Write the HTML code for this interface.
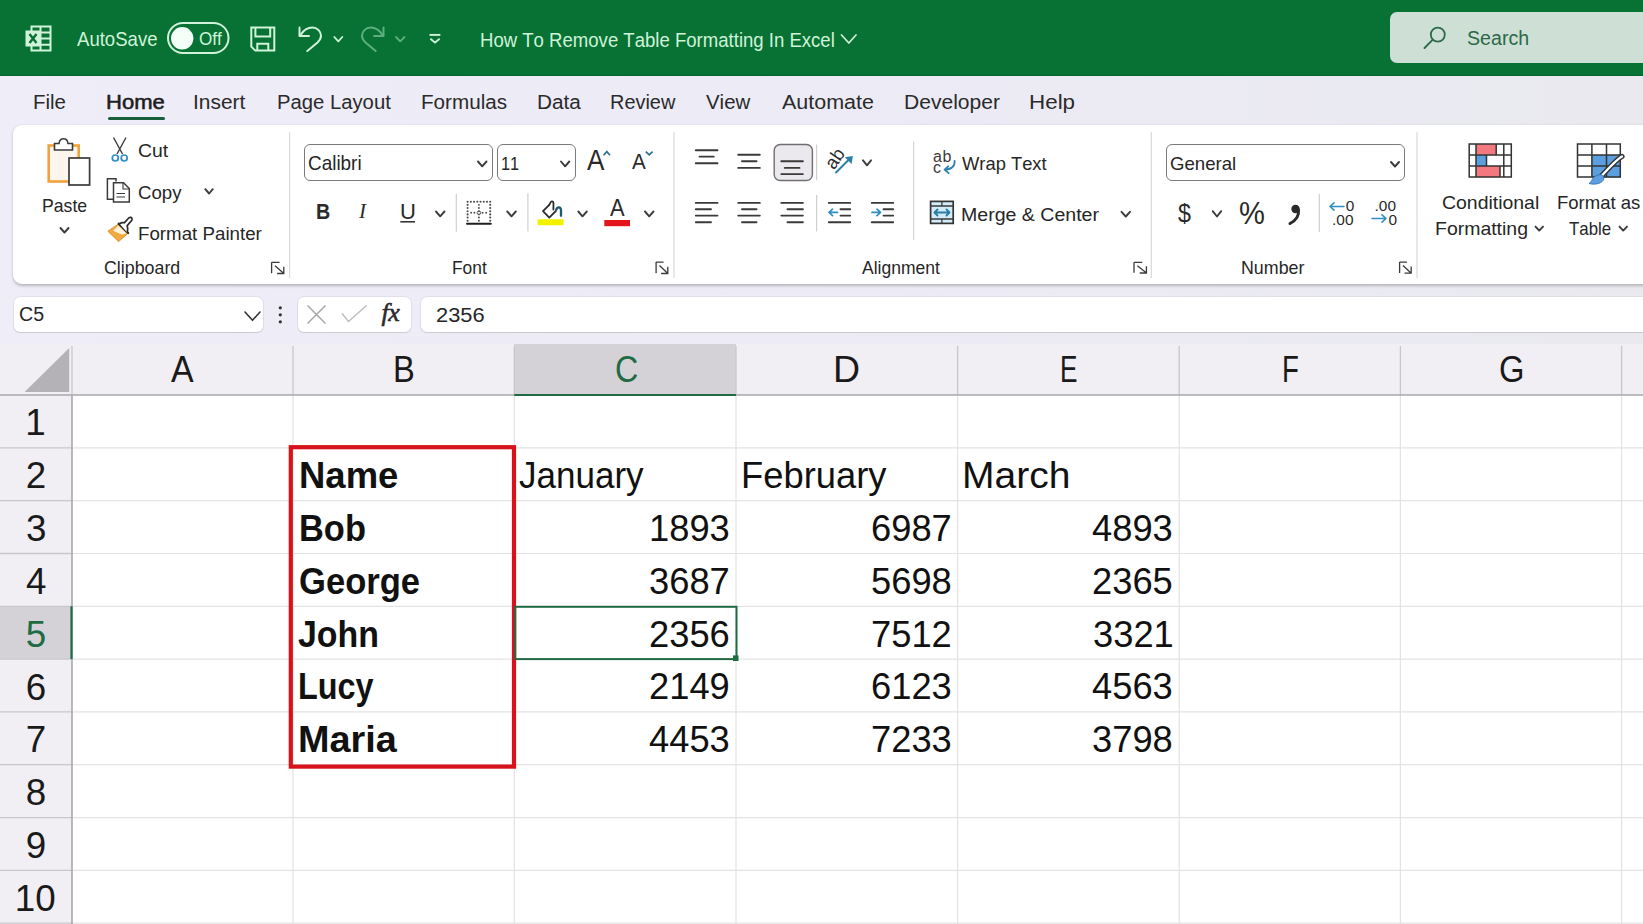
<!DOCTYPE html>
<html><head><meta charset="utf-8">
<style>
*{margin:0;padding:0;box-sizing:border-box}
html,body{width:1643px;height:924px;overflow:hidden;background:#fff;font-family:"Liberation Sans",sans-serif;color:#262626}
.a{position:absolute}
.t{position:absolute;white-space:nowrap;line-height:1;transform-origin:0 0;font-kerning:none}
svg{position:absolute;left:0;top:0}
</style></head><body>
<div class="a" style="left:0;top:0;width:1643px;height:76px;background:#077233;border-bottom:1px solid #05622c"></div>
<div class="a" style="left:0;top:76px;width:1643px;height:268px;background:linear-gradient(90deg,#eeedf8 0%,#ecebf5 60%,#e9e9ef 100%)"></div>
<div class="a" style="left:13px;top:125px;width:1660px;height:159px;background:#fff;border-radius:9px;box-shadow:0 1.5px 3px rgba(0,0,0,0.22)"></div>
<div class="a" style="left:1390px;top:12px;width:300px;height:51px;background:#cee0d6;border-radius:7px"></div>
<div class="a" style="left:14px;top:297px;width:249px;height:35px;background:#fff;border-radius:6px;box-shadow:0 0 0 1px rgba(0,0,0,0.05),0 1px 1px rgba(0,0,0,0.10)"></div>
<div class="a" style="left:298px;top:297px;width:113px;height:35px;background:#fff;border-radius:6px;box-shadow:0 0 0 1px rgba(0,0,0,0.05),0 1px 1px rgba(0,0,0,0.10)"></div>
<div class="a" style="left:421px;top:297px;width:1300px;height:35px;background:#fff;border-radius:6px;box-shadow:0 0 0 1px rgba(0,0,0,0.05),0 1px 1px rgba(0,0,0,0.10)"></div>
<div class="t" style="left:76.96px;top:30.19px;font-size:19.62px;color:#d0f3da;font-weight:400;transform:scaleX(0.9468);">AutoSave</div>
<div class="t" style="left:198.69px;top:31.49px;font-size:17.73px;color:#d0f3da;font-weight:400;transform:scaleX(0.9635);">Off</div>
<div class="t" style="left:480.48px;top:28.66px;font-size:21.08px;color:#d0f3da;font-weight:400;transform:scaleX(0.8805);">How To Remove Table Formatting In Excel</div>
<div class="t" style="left:1467.11px;top:29.47px;font-size:19.77px;color:#2b6848;font-weight:400;transform:scaleX(0.9925);">Search</div>
<div class="t" style="left:32.92px;top:91.77px;font-size:20.35px;color:#2a2a2a;font-weight:400;transform:scaleX(1.0061);">File</div>
<div class="t" style="left:105.79px;top:91.77px;font-size:20.35px;color:#1c1c1c;font-weight:400;transform:scaleX(1.0830);-webkit-text-stroke:0.55px #1c1c1c">Home</div>
<div class="t" style="left:192.87px;top:91.77px;font-size:20.35px;color:#2a2a2a;font-weight:400;transform:scaleX(1.0273);">Insert</div>
<div class="t" style="left:277.34px;top:91.77px;font-size:20.35px;color:#2a2a2a;font-weight:400;transform:scaleX(0.9960);">Page Layout</div>
<div class="t" style="left:420.71px;top:91.77px;font-size:20.35px;color:#2a2a2a;font-weight:400;transform:scaleX(1.0146);">Formulas</div>
<div class="t" style="left:536.59px;top:91.77px;font-size:20.35px;color:#2a2a2a;font-weight:400;transform:scaleX(1.0215);">Data</div>
<div class="t" style="left:610.37px;top:91.77px;font-size:20.35px;color:#2a2a2a;font-weight:400;transform:scaleX(0.9785);">Review</div>
<div class="t" style="left:706.31px;top:91.77px;font-size:20.35px;color:#2a2a2a;font-weight:400;transform:scaleX(1.0030);">View</div>
<div class="t" style="left:781.66px;top:91.77px;font-size:20.35px;color:#2a2a2a;font-weight:400;transform:scaleX(1.0562);">Automate</div>
<div class="t" style="left:904.17px;top:91.77px;font-size:20.35px;color:#2a2a2a;font-weight:400;transform:scaleX(1.0348);">Developer</div>
<div class="t" style="left:1029.16px;top:91.77px;font-size:20.35px;color:#2a2a2a;font-weight:400;transform:scaleX(1.1010);">Help</div>
<div class="a" style="left:107.5px;top:116.8px;width:57.5px;height:3.4px;background:#1a5f3b;border-radius:2px"></div>
<div class="t" style="left:42.15px;top:197.79px;font-size:17.73px;color:#262626;font-weight:400;transform:scaleX(0.9953);">Paste</div>
<div class="t" style="left:137.91px;top:143.24px;font-size:17.44px;color:#262626;font-weight:400;transform:scaleX(1.1137);">Cut</div>
<div class="t" style="left:137.95px;top:184.54px;font-size:17.44px;color:#262626;font-weight:400;transform:scaleX(1.0679);">Copy</div>
<div class="t" style="left:138.46px;top:225.54px;font-size:17.44px;color:#262626;font-weight:400;transform:scaleX(1.0737);">Format Painter</div>
<div class="t" style="left:103.80px;top:259.54px;font-size:17.44px;color:#262626;font-weight:400;transform:scaleX(1.0214);">Clipboard</div>
<div class="a" style="left:304.1px;top:143.5px;width:188.7px;height:37.8px;border-radius:6px;background:#fff;border:1.4px solid #7a7a7a"></div>
<div class="t" style="left:307.64px;top:153.81px;font-size:19.48px;color:#262626;font-weight:400;transform:scaleX(0.9717);">Calibri</div>
<div class="a" style="left:496.5px;top:143.9px;width:79.2px;height:36.9px;border-radius:6px;background:#fff;border:1.4px solid #7a7a7a"></div>
<div class="t" style="left:501.26px;top:154.50px;font-size:18.31px;color:#262626;font-weight:400;transform:scaleX(0.8904);">11</div>
<div class="t" style="left:586.95px;top:144.53px;font-size:30.09px;color:#2a2a2a;font-weight:400;transform:scaleX(0.8672);">A</div>
<div class="t" style="left:632.26px;top:151.05px;font-size:22.38px;color:#2a2a2a;font-weight:400;transform:scaleX(0.9230);">A</div>
<div class="t" style="left:315.68px;top:200.16px;font-size:22.97px;color:#2a2a2a;font-weight:700;transform:scaleX(0.8568);">B</div>
<div class="t" style="left:359px;top:201px;font-size:21px;color:#2a2a2a;font-family:'Liberation Serif',serif;font-style:italic">I</div>
<div class="t" style="left:399.80px;top:200.16px;font-size:22.97px;color:#2a2a2a;font-weight:400;transform:scaleX(0.9585);">U</div>
<div class="t" style="left:609.96px;top:197.31px;font-size:23.26px;color:#2a2a2a;font-weight:400;transform:scaleX(0.9403);">A</div>
<div class="t" style="left:452.38px;top:260.24px;font-size:17.44px;color:#262626;font-weight:400;transform:scaleX(0.9957);">Font</div>
<div class="t" style="left:828px;top:145.5px;font-size:18.5px;color:#2a2a2a;transform:rotate(-55deg);transform-origin:12px 14px">ab</div>
<div class="t" style="left:933px;top:148.8px;font-size:16px;color:#3a3a3a;letter-spacing:0.6px">ab</div>
<div class="t" style="left:933px;top:159.8px;font-size:16px;color:#3a3a3a">c</div>
<div class="t" style="left:961.92px;top:154.50px;font-size:18.31px;color:#262626;font-weight:400;transform:scaleX(1.0030);">Wrap Text</div>
<div class="t" style="left:960.80px;top:206.01px;font-size:18.90px;color:#262626;font-weight:400;transform:scaleX(1.0349);">Merge &amp; Center</div>
<div class="t" style="left:862.37px;top:260.24px;font-size:17.44px;color:#262626;font-weight:400;transform:scaleX(1.0026);">Alignment</div>
<div class="a" style="left:1166.4px;top:144.0px;width:238.3px;height:37.0px;border-radius:6px;background:#fff;border:1.4px solid #7a7a7a"></div>
<div class="t" style="left:1169.56px;top:154.18px;font-size:19.04px;color:#262626;font-weight:400;transform:scaleX(0.9785);">General</div>
<div class="t" style="left:1177.75px;top:199.85px;font-size:26.16px;color:#2a2a2a;font-weight:400;transform:scaleX(0.8882);">$</div>
<div class="t" style="left:1238.56px;top:198.15px;font-size:31.25px;color:#2a2a2a;font-weight:400;transform:scaleX(0.9312);">%</div>
<div class="t" style="left:1345.80px;top:198.36px;font-size:15.41px;color:#2a2a2a;font-weight:400;transform:scaleX(1.0000);">0</div>
<div class="t" style="left:1332.09px;top:211.56px;font-size:15.41px;color:#2a2a2a;font-weight:400;transform:scaleX(1.0000);">.00</div>
<div class="t" style="left:1374.59px;top:198.36px;font-size:15.41px;color:#2a2a2a;font-weight:400;transform:scaleX(1.0000);">.00</div>
<div class="t" style="left:1388.40px;top:211.56px;font-size:15.41px;color:#2a2a2a;font-weight:400;transform:scaleX(1.0000);">0</div>
<div class="t" style="left:1240.54px;top:259.77px;font-size:17.88px;color:#262626;font-weight:400;transform:scaleX(0.9980);">Number</div>
<div class="t" style="left:1441.81px;top:194.45px;font-size:18.60px;color:#262626;font-weight:400;transform:scaleX(1.0451);">Conditional</div>
<div class="t" style="left:1434.90px;top:220.05px;font-size:18.60px;color:#262626;font-weight:400;transform:scaleX(1.0465);">Formatting</div>
<div class="t" style="left:1557.08px;top:194.45px;font-size:18.60px;color:#262626;font-weight:400;transform:scaleX(0.9958);">Format as</div>
<div class="t" style="left:1569.32px;top:220.05px;font-size:18.60px;color:#262626;font-weight:400;transform:scaleX(0.9052);">Table</div>
<div class="t" style="left:19.00px;top:305.27px;font-size:19.77px;color:#262626;font-weight:400;transform:scaleX(0.9942);">C5</div>
<div class="t" style="left:381.5px;top:300px;font-size:26px;font-weight:400;-webkit-text-stroke:0.6px #2a2a2a;font-family:'Liberation Serif',serif;font-style:italic;color:#2a2a2a;letter-spacing:-0.5px">fx</div>
<div class="t" style="left:436.30px;top:305.67px;font-size:19.77px;color:#262626;font-weight:400;transform:scaleX(1.1066);">2356</div>
<div class="a" style="left:0;top:344.0px;width:1643px;height:51.0px;background:#f1eff3"></div>
<div class="a" style="left:0;top:395.0px;width:72px;height:529.0px;background:#f1eff3"></div>
<div class="a" style="left:514.3px;top:344.0px;width:221.7px;height:51.0px;background:#d4d2d7"></div>
<div class="a" style="left:0;top:606.3px;width:72px;height:52.8px;background:#d4d2d7"></div>
<div class="t" style="left:170.93px;top:351.30px;font-size:37.21px;color:#1a1a1a;font-weight:400;transform:scaleX(0.9119);">A</div>
<div class="t" style="left:393.32px;top:351.30px;font-size:37.21px;color:#1a1a1a;font-weight:400;transform:scaleX(0.8786);">B</div>
<div class="t" style="left:614.56px;top:351.30px;font-size:37.21px;color:#1f6b43;font-weight:400;transform:scaleX(0.8657);">C</div>
<div class="t" style="left:832.93px;top:351.30px;font-size:37.21px;color:#1a1a1a;font-weight:400;transform:scaleX(1.0073);">D</div>
<div class="t" style="left:1059.75px;top:351.30px;font-size:37.21px;color:#1a1a1a;font-weight:400;transform:scaleX(0.7041);">E</div>
<div class="t" style="left:1281.93px;top:351.30px;font-size:37.21px;color:#1a1a1a;font-weight:400;transform:scaleX(0.7423);">F</div>
<div class="t" style="left:1499.35px;top:351.30px;font-size:37.21px;color:#1a1a1a;font-weight:400;transform:scaleX(0.8810);">G</div>
<div class="t" style="left:25.27px;top:405.47px;font-size:36.77px;color:#1a1a1a;font-weight:400;transform:scaleX(1.0000);">1</div>
<div class="t" style="left:25.77px;top:458.29px;font-size:36.77px;color:#1a1a1a;font-weight:400;transform:scaleX(1.0000);">2</div>
<div class="t" style="left:25.88px;top:511.11px;font-size:36.77px;color:#1a1a1a;font-weight:400;transform:scaleX(1.0000);">3</div>
<div class="t" style="left:25.89px;top:563.93px;font-size:36.77px;color:#1a1a1a;font-weight:400;transform:scaleX(1.0000);">4</div>
<div class="t" style="left:25.81px;top:616.75px;font-size:36.77px;color:#1f6b43;font-weight:400;transform:scaleX(1.0000);">5</div>
<div class="t" style="left:25.65px;top:669.57px;font-size:36.77px;color:#1a1a1a;font-weight:400;transform:scaleX(1.0000);">6</div>
<div class="t" style="left:25.76px;top:722.39px;font-size:36.77px;color:#1a1a1a;font-weight:400;transform:scaleX(1.0000);">7</div>
<div class="t" style="left:25.77px;top:775.21px;font-size:36.77px;color:#1a1a1a;font-weight:400;transform:scaleX(1.0000);">8</div>
<div class="t" style="left:25.78px;top:828.03px;font-size:36.77px;color:#1a1a1a;font-weight:400;transform:scaleX(1.0000);">9</div>
<div class="t" style="left:14.87px;top:880.85px;font-size:36.77px;color:#1a1a1a;font-weight:400;transform:scaleX(1.0000);">10</div>
<div class="t" style="left:298.76px;top:457.12px;font-size:37.21px;color:#111;font-weight:700;transform:scaleX(0.9807);">Name</div>
<div class="t" style="left:519.45px;top:457.12px;font-size:37.21px;color:#111;font-weight:400;transform:scaleX(0.9414);">January</div>
<div class="t" style="left:740.82px;top:457.12px;font-size:37.21px;color:#111;font-weight:400;transform:scaleX(0.9769);">February</div>
<div class="t" style="left:961.60px;top:457.12px;font-size:37.21px;color:#111;font-weight:400;transform:scaleX(1.0489);">March</div>
<div class="t" style="left:298.90px;top:509.94px;font-size:37.21px;color:#111;font-weight:700;transform:scaleX(0.9251);">Bob</div>
<div class="t" style="left:649.23px;top:509.94px;font-size:37.21px;color:#111;font-weight:400;transform:scaleX(0.9757);">1893</div>
<div class="t" style="left:871.07px;top:509.94px;font-size:37.21px;color:#111;font-weight:400;transform:scaleX(0.9757);">6987</div>
<div class="t" style="left:1092.43px;top:509.94px;font-size:37.21px;color:#111;font-weight:400;transform:scaleX(0.9757);">4893</div>
<div class="t" style="left:299.08px;top:562.76px;font-size:37.21px;color:#111;font-weight:700;transform:scaleX(0.9296);">George</div>
<div class="t" style="left:649.47px;top:562.76px;font-size:37.21px;color:#111;font-weight:400;transform:scaleX(0.9757);">3687</div>
<div class="t" style="left:870.82px;top:562.76px;font-size:37.21px;color:#111;font-weight:400;transform:scaleX(0.9757);">5698</div>
<div class="t" style="left:1092.36px;top:562.76px;font-size:37.21px;color:#111;font-weight:400;transform:scaleX(0.9757);">2365</div>
<div class="t" style="left:298.29px;top:615.58px;font-size:37.21px;color:#111;font-weight:700;transform:scaleX(0.9115);">John</div>
<div class="t" style="left:649.23px;top:615.58px;font-size:37.21px;color:#111;font-weight:400;transform:scaleX(0.9757);">2356</div>
<div class="t" style="left:871.07px;top:615.58px;font-size:37.21px;color:#111;font-weight:400;transform:scaleX(0.9757);">7512</div>
<div class="t" style="left:1092.61px;top:615.58px;font-size:37.21px;color:#111;font-weight:400;transform:scaleX(0.9757);">3321</div>
<div class="t" style="left:298.33px;top:668.40px;font-size:37.21px;color:#111;font-weight:700;transform:scaleX(0.8698);">Lucy</div>
<div class="t" style="left:649.36px;top:668.40px;font-size:37.21px;color:#111;font-weight:400;transform:scaleX(0.9757);">2149</div>
<div class="t" style="left:870.83px;top:668.40px;font-size:37.21px;color:#111;font-weight:400;transform:scaleX(0.9757);">6123</div>
<div class="t" style="left:1092.43px;top:668.40px;font-size:37.21px;color:#111;font-weight:400;transform:scaleX(0.9757);">4563</div>
<div class="t" style="left:297.97px;top:721.22px;font-size:37.21px;color:#111;font-weight:700;transform:scaleX(1.0163);">Maria</div>
<div class="t" style="left:649.23px;top:721.22px;font-size:37.21px;color:#111;font-weight:400;transform:scaleX(0.9757);">4453</div>
<div class="t" style="left:870.83px;top:721.22px;font-size:37.21px;color:#111;font-weight:400;transform:scaleX(0.9757);">7233</div>
<div class="t" style="left:1092.42px;top:721.22px;font-size:37.21px;color:#111;font-weight:400;transform:scaleX(0.9757);">3798</div>
<svg width="1643" height="924" viewBox="0 0 1643 924">
<rect x="31.5" y="26.5" width="19" height="24" fill="none" stroke="#d0f3da" stroke-width="2"/>
<path d="M40.5 26.5V50.5M31.5 32.5H50.5M31.5 38.5H50.5M31.5 44.8H50.5" stroke="#d0f3da" stroke-width="2"/>
<rect x="25.5" y="30.5" width="15" height="16" fill="#d0f3da"/>
<path d="M29.5 34L36.5 43M36.5 34L29.5 43" stroke="#077233" stroke-width="2.4"/>
<rect x="168" y="23" width="60.5" height="30" rx="15" fill="none" stroke="#d0f3da" stroke-width="2"/>
<circle cx="182.2" cy="38.3" r="11.2" fill="#f4fff7"/>
<path d="M251.3 27.6H274.3V50.6H255.3L251.3 46.6Z" fill="none" stroke="#d0f3da" stroke-width="2"/>
<path d="M255.4 27.6V36.4H270.2V27.6M257.3 50.6V43.8H268.3V50.6" fill="none" stroke="#d0f3da" stroke-width="2"/>
<path d="M299.5 27.5V36H309" fill="none" stroke="#d0f3da" stroke-width="2" stroke-linecap="round" stroke-linejoin="round"/>
<path d="M300.5 35C304 29.5 308 27.6 312.3 27.6C317.5 27.6 321 31.5 321 35.8C321 38.5 319.5 40.6 317.5 42.5L307.3 51" fill="none" stroke="#d0f3da" stroke-width="2" stroke-linecap="round"/>
<path d="M334.3 37.0L338.3 41.3L342.3 37.0" fill="none" stroke="#d0f3da" stroke-width="1.80" stroke-linecap="round" stroke-linejoin="round"/>
<path d="M383.5 27.5V36H374" fill="none" stroke="#5fae80" stroke-width="2" stroke-linecap="round" stroke-linejoin="round"/>
<path d="M382.5 35C379 29.5 375 27.6 370.7 27.6C365.5 27.6 362 31.5 362 35.8C362 38.5 363.5 40.6 365.5 42.5L375.7 51" fill="none" stroke="#5fae80" stroke-width="2" stroke-linecap="round"/>
<path d="M396.0 37.0L400.2 41.3L404.5 37.0" fill="none" stroke="#5fae80" stroke-width="1.80" stroke-linecap="round" stroke-linejoin="round"/>
<path d="M429.5 34.9H440.4" stroke="#d0f3da" stroke-width="1.9"/>
<path d="M431.0 39.2L435.0 42.6L439.0 39.2" fill="none" stroke="#d0f3da" stroke-width="1.90" stroke-linecap="round" stroke-linejoin="round"/>
<path d="M841.5 35.0L848.8 43.0L856.0 35.0" fill="none" stroke="#d0f3da" stroke-width="1.70" stroke-linecap="round" stroke-linejoin="round"/>
<circle cx="1437.8" cy="34.6" r="7" fill="none" stroke="#2d6a4a" stroke-width="1.8"/>
<path d="M1432.8 39.6L1424.5 48" stroke="#2d6a4a" stroke-width="1.9" stroke-linecap="round"/>
<rect x="48.7" y="145.5" width="30" height="36" fill="#fdf6ec" stroke="#f0a33a" stroke-width="2.6"/>
<path d="M54.5 150V143.5H59C59.5 140 61 138.7 63.5 138.7C66 138.7 67.5 140 68 143.5H72.5V150Z" fill="#fff" stroke="#3b3b3b" stroke-width="1.6"/>
<rect x="69" y="158" width="20.6" height="27" fill="#fff" stroke="#3b3b3b" stroke-width="1.7"/>
<path d="M60.5 228.0L64.5 232.5L68.5 228.0" fill="none" stroke="#3b3b3b" stroke-width="1.90" stroke-linecap="round" stroke-linejoin="round"/>
<path d="M113.5 137.5L122.5 154M126 137.5L117 154" stroke="#3b3b3b" stroke-width="1.4"/>
<circle cx="115.3" cy="158" r="3" fill="none" stroke="#2f8fc4" stroke-width="1.7"/><circle cx="124.2" cy="158" r="3" fill="none" stroke="#2f8fc4" stroke-width="1.7"/>
<path d="M116 181.5V178.8H107.4V199.2H113" fill="none" stroke="#3b3b3b" stroke-width="1.5"/>
<path d="M113.5 182.7H123.5L129.3 188.5V202H113.5Z" fill="#fff" stroke="#3b3b3b" stroke-width="1.5"/>
<path d="M123 183V189H129M116.5 193.5H125M116.5 197H125" fill="none" stroke="#3b3b3b" stroke-width="1.1"/>
<path d="M205.3 189.2L209.1 193.5L212.8 189.2" fill="none" stroke="#3b3b3b" stroke-width="1.90" stroke-linecap="round" stroke-linejoin="round"/>
<path d="M107.8 231.2L118.2 224.2L127.8 233.6L118.6 241.6Z" fill="#f2a93e" stroke="#d68d2a" stroke-width="0.9" stroke-linejoin="round"/>
<path d="M118.4 225.6L126.4 233.4L121.5 234.6L113.2 230.8Z" fill="#fff3de"/>
<path d="M118.7 223.6L128.2 233" stroke="#2a2a2a" stroke-width="2.2" stroke-linecap="round"/>
<path d="M119.6 223.8C121.2 222.6 122.8 222.4 124.2 222.8L128.8 218C129.8 217 131.6 217.2 132 218.6C132.3 219.4 132 220.2 131.4 220.8L127.2 225.6C127.8 227.6 127.8 230.4 127.2 232.4" fill="#fff" stroke="#2a2a2a" stroke-width="1.7" stroke-linejoin="round"/>
<path d="M271.6 273.3V262.3M271.6 262.3H279.6" stroke="#3b3b3b" stroke-width="1.3" fill="none"/>
<path d="M275.0 265.7L283.6 273.3M277.1 273.5H283.8V266.8" stroke="#3b3b3b" stroke-width="1.3" fill="none"/>
<path d="M289.6 132.0V278.0" stroke="#d9d9d9" stroke-width="1.2"/>
<path d="M478.0 161.5L482.2 166.3L486.5 161.5" fill="none" stroke="#3b3b3b" stroke-width="1.90" stroke-linecap="round" stroke-linejoin="round"/>
<path d="M561.0 161.5L565.1 166.3L569.3 161.5" fill="none" stroke="#3b3b3b" stroke-width="1.90" stroke-linecap="round" stroke-linejoin="round"/>
<path d="M603.6 155.2L606.8 151.6L610 155.2" fill="none" stroke="#2f7390" stroke-width="1.7"/>
<path d="M645.8 151.6L649.2 154.8L652.6 151.6" fill="none" stroke="#2f7390" stroke-width="1.8"/>
<path d="M400.3 221.8H415" stroke="#2a2a2a" stroke-width="1.5"/>
<path d="M436.0 211.5L440.2 216.3L444.5 211.5" fill="none" stroke="#3b3b3b" stroke-width="1.90" stroke-linecap="round" stroke-linejoin="round"/>
<path d="M456.3 194.0V231.8" stroke="#cfcfcf" stroke-width="1.2"/>
<g fill="#4d4d4d"><circle cx="467.60" cy="201.7" r="1.05"/><circle cx="470.83" cy="201.7" r="1.05"/><circle cx="474.06" cy="201.7" r="1.05"/><circle cx="477.29" cy="201.7" r="1.05"/><circle cx="480.51" cy="201.7" r="1.05"/><circle cx="483.74" cy="201.7" r="1.05"/><circle cx="486.97" cy="201.7" r="1.05"/><circle cx="490.20" cy="201.7" r="1.05"/><circle cx="467.6" cy="204.87" r="1.05"/><circle cx="490.2" cy="204.87" r="1.05"/><circle cx="478.9" cy="204.87" r="0.95"/><circle cx="467.6" cy="208.04" r="1.05"/><circle cx="490.2" cy="208.04" r="1.05"/><circle cx="478.9" cy="208.04" r="0.95"/><circle cx="467.6" cy="211.21" r="1.05"/><circle cx="490.2" cy="211.21" r="1.05"/><circle cx="478.9" cy="211.21" r="0.95"/><circle cx="467.6" cy="214.38" r="1.05"/><circle cx="490.2" cy="214.38" r="1.05"/><circle cx="478.9" cy="214.38" r="0.95"/><circle cx="467.6" cy="217.55" r="1.05"/><circle cx="490.2" cy="217.55" r="1.05"/><circle cx="478.9" cy="217.55" r="0.95"/><circle cx="467.6" cy="220.72" r="1.05"/><circle cx="490.2" cy="220.72" r="1.05"/><circle cx="478.9" cy="220.72" r="0.95"/><circle cx="471.10" cy="212.8" r="0.95"/><circle cx="474.40" cy="212.8" r="0.95"/><circle cx="482.60" cy="212.8" r="0.95"/><circle cx="486.20" cy="212.8" r="0.95"/><circle cx="478.9" cy="212.8" r="1.8" fill="none" stroke="#555" stroke-width="0.9"/></g>
<path d="M467 223.8H490.8" stroke="#1e1e1e" stroke-width="2" stroke-linecap="round"/>
<path d="M507.3 211.5L511.5 216.3L515.8 211.5" fill="none" stroke="#3b3b3b" stroke-width="1.90" stroke-linecap="round" stroke-linejoin="round"/>
<path d="M527.9 193.3V231.4" stroke="#cfcfcf" stroke-width="1.2"/>
<path d="M549.3 204.8L543 211.2L549.3 217.6L556.2 210.6" fill="none" stroke="#2a2a2a" stroke-width="1.8" stroke-linejoin="round"/>
<path d="M549.3 204.8L550.4 202.6C551.2 200.9 553.4 201 553.5 203.2L553.4 209.6" fill="none" stroke="#2a2a2a" stroke-width="1.8" stroke-linecap="round"/>
<path d="M556.2 209.8C557.2 206.6 560.8 206.6 561 210.2V215.8" fill="none" stroke="#1f5a70" stroke-width="2.3" stroke-linecap="round"/>
<rect x="537.6" y="219.3" width="26" height="6" rx="1" fill="#f2f200"/>
<path d="M578.3 211.5L582.5 216.3L586.8 211.5" fill="none" stroke="#3b3b3b" stroke-width="1.90" stroke-linecap="round" stroke-linejoin="round"/>
<rect x="604.3" y="220" width="25.7" height="6.2" fill="#e3141b"/>
<path d="M645.0 211.5L649.2 216.3L653.5 211.5" fill="none" stroke="#3b3b3b" stroke-width="1.90" stroke-linecap="round" stroke-linejoin="round"/>
<path d="M656.1 273.3V262.1M656.1 262.1H663.6" stroke="#3b3b3b" stroke-width="1.3" fill="none"/>
<path d="M659.5 265.5L667.6 273.3M661.1 273.5H667.8V266.8" stroke="#3b3b3b" stroke-width="1.3" fill="none"/>
<path d="M674.0 132.0V278.0" stroke="#d9d9d9" stroke-width="1.2"/>
<path d="M695.8 150.2H717.5M699.5 156.6H713.8M695.8 163.2H717.5" stroke="#3a3a3a" stroke-width="1.9" stroke-linecap="round"/>
<path d="M738.2 154.7H759.8M742.0 161.3H756.5M738.2 167.9H759.8" stroke="#3a3a3a" stroke-width="1.9" stroke-linecap="round"/>
<rect x="774.2" y="144.5" width="38.2" height="36" rx="6" fill="#ebe9ee" stroke="#6f6f6f" stroke-width="1.4"/>
<path d="M781.3 161.3H802.9M784.8 167.9H799.5M781.3 174.1H802.9" stroke="#3a3a3a" stroke-width="1.9" stroke-linecap="round"/>
<path d="M816.6 144.5V180.3" stroke="#cfcfcf" stroke-width="1.2"/>
<path d="M836 172.5L849.5 159" fill="none" stroke="#2b7fa8" stroke-width="1.9" stroke-linecap="round"/>
<path d="M852.8 156L844.8 157.2L851.6 164Z" fill="#2b7fa8"/>
<path d="M863.0 160.3L867.0 165.3L871.0 160.3" fill="none" stroke="#3b3b3b" stroke-width="1.90" stroke-linecap="round" stroke-linejoin="round"/>
<path d="M695.8 202.9H717.5M695.8 209.2H711.0M695.8 215.6H717.5M695.8 222.2H711.0" stroke="#3a3a3a" stroke-width="1.9" stroke-linecap="round"/>
<path d="M738.2 202.9H759.8M742.0 209.2H756.5M738.2 215.6H759.8M742.0 222.2H756.5" stroke="#3a3a3a" stroke-width="1.9" stroke-linecap="round"/>
<path d="M781.3 202.9H802.9M787.5 209.2H802.9M781.3 215.6H802.9M787.5 222.2H802.9" stroke="#3a3a3a" stroke-width="1.9" stroke-linecap="round"/>
<path d="M816.6 194.9V231.4" stroke="#cfcfcf" stroke-width="1.2"/>
<path d="M828.8 202.9H850.2M840.5 209.2H850.2M840.5 215.6H850.2M828.8 222.2H850.2" stroke="#3a3a3a" stroke-width="1.9" stroke-linecap="round"/>
<path d="M829 212.4H837.5M832.5 209.2L829 212.4L832.5 215.6" fill="none" stroke="#2f8fc4" stroke-width="1.7" stroke-linecap="round" stroke-linejoin="round"/>
<path d="M871.8 202.9H893.2M883.5 209.2H893.2M883.5 215.6H893.2M871.8 222.2H893.2" stroke="#3a3a3a" stroke-width="1.9" stroke-linecap="round"/>
<path d="M872 212.4H880.5M877 209.2L880.5 212.4L877 215.6" fill="none" stroke="#2f8fc4" stroke-width="1.7" stroke-linecap="round" stroke-linejoin="round"/>
<path d="M913.7 141.6V240.0" stroke="#d4d4d4" stroke-width="1.2"/>
<path d="M954.6 160.8C955.2 166.2 951.2 169.6 944.6 169.6M944.6 169.6L948.2 166.3M944.6 169.6L948.6 173.2" fill="none" stroke="#2c82b0" stroke-width="1.8" stroke-linecap="round" stroke-linejoin="round"/>
<rect x="930.6" y="201.4" width="22.6" height="22" fill="#d2edf9" stroke="#333" stroke-width="1.7"/>
<path d="M930.4 206H953.4M930.4 219H953.4M941.9 201.5V206M941.9 219V223.5" stroke="#3a3a3a" stroke-width="1.3"/>
<path d="M934.5 212.5H949.5M937.5 209.5L934.5 212.5L937.5 215.5M946.5 209.5L949.5 212.5L946.5 215.5" fill="none" stroke="#287ea8" stroke-width="1.9" stroke-linecap="round" stroke-linejoin="round"/>
<path d="M1121.5 211.8L1125.8 216.5L1130.0 211.8" fill="none" stroke="#3b3b3b" stroke-width="1.90" stroke-linecap="round" stroke-linejoin="round"/>
<path d="M1134.0 272.8V262.3M1134.0 262.3H1142.2" stroke="#3b3b3b" stroke-width="1.3" fill="none"/>
<path d="M1137.4 265.7L1146.2 272.8M1139.7 273.0H1146.4V266.3" stroke="#3b3b3b" stroke-width="1.3" fill="none"/>
<path d="M1151.3 132.0V278.0" stroke="#d9d9d9" stroke-width="1.2"/>
<path d="M1391.0 162.0L1395.0 166.5L1399.0 162.0" fill="none" stroke="#3b3b3b" stroke-width="1.90" stroke-linecap="round" stroke-linejoin="round"/>
<path d="M1212.7 211.2L1217.0 216.5L1221.2 211.2" fill="none" stroke="#3b3b3b" stroke-width="1.90" stroke-linecap="round" stroke-linejoin="round"/>
<circle cx="1295.5" cy="209" r="4.2" fill="#2a2a2a"/><path d="M1298.5 210C1299 215 1297 220 1290 223.5" fill="none" stroke="#2a2a2a" stroke-width="3" stroke-linecap="round"/>
<path d="M1319.3 194.0V232.0" stroke="#cfcfcf" stroke-width="1.2"/>
<path d="M1330 206.5H1344M1334 202.8L1330 206.5L1334 210.2" fill="none" stroke="#2f8fc4" stroke-width="1.6" stroke-linecap="round" stroke-linejoin="round"/>
<path d="M1372 218.5H1386M1382 214.8L1386 218.5L1382 222.2" fill="none" stroke="#2f8fc4" stroke-width="1.6" stroke-linecap="round" stroke-linejoin="round"/>
<path d="M1399.6 272.9V262.1M1399.6 262.1H1407.0" stroke="#3b3b3b" stroke-width="1.3" fill="none"/>
<path d="M1403.0 265.5L1411.0 272.9M1404.5 273.1H1411.2V266.4" stroke="#3b3b3b" stroke-width="1.3" fill="none"/>
<path d="M1417.0 132.0V278.0" stroke="#d9d9d9" stroke-width="1.2"/>
<rect x="1476" y="144" width="20.2" height="10.8" fill="#f4797f"/>
<rect x="1476" y="155" width="10.5" height="11" fill="#5b9fe0"/>
<rect x="1476" y="166" width="24" height="11.2" fill="#f4797f"/>
<path d="M1469.2 144H1511.3V177.1H1469.2ZM1476 144V177.1M1496.2 144V155M1503.8 144V177.1M1469.2 155H1511.3M1469.2 166H1511.3M1486.5 155V166M1500 166V177.1" fill="none" stroke="#333" stroke-width="1.5"/>
<rect x="1591.9" y="155" width="29" height="22.5" fill="#5b9fe0"/>
<path d="M1577.5 144H1620.3V177.1H1577.5ZM1591.9 144V177.1M1606.5 144V177.1M1577.5 155H1620.3M1577.5 166H1620.3" fill="none" stroke="#333" stroke-width="1.5"/>
<path d="M1622 156.5C1619 158 1607 170 1601.5 176" fill="none" stroke="#333" stroke-width="5.2" stroke-linecap="round"/>
<path d="M1622 156.5C1619 158 1607 170 1601.5 176" fill="none" stroke="#fff" stroke-width="2.4" stroke-linecap="round"/>
<path d="M1597 175.5C1601 173 1605 176 1603.5 180C1601 184 1594 185 1589 183.5C1592.5 181.5 1592 176.5 1597 175.5Z" fill="#5b9fe0" stroke="#2a6fb0" stroke-width="0.8"/>
<path d="M1535.5 226.6L1539.2 230.6L1543.0 226.6" fill="none" stroke="#3b3b3b" stroke-width="1.90" stroke-linecap="round" stroke-linejoin="round"/>
<path d="M1619.5 226.6L1623.2 230.6L1627.0 226.6" fill="none" stroke="#3b3b3b" stroke-width="1.90" stroke-linecap="round" stroke-linejoin="round"/>
<path d="M245.0 312.0L252.5 320.3L260.0 312.0" fill="none" stroke="#333" stroke-width="1.60" stroke-linecap="round" stroke-linejoin="round"/>
<circle cx="280.3" cy="307.8" r="1.6" fill="#333"/><circle cx="280.3" cy="314.8" r="1.6" fill="#333"/><circle cx="280.3" cy="321.8" r="1.6" fill="#333"/>
<path d="M307.5 305.5L325.5 323.5M325.5 305.5L307.5 323.5" stroke="#a6a6a6" stroke-width="1.5"/>
<path d="M342 313.5L348.5 321.5L366.5 305.5" fill="none" stroke="#bdbdbd" stroke-width="1.5"/>
<path d="M24.6 392H69.2V348Z" fill="#b4b2b6"/>
<path d="M72 447.8H1643M72 500.6H1643M72 553.5H1643M72 606.3H1643M72 659.1H1643M72 711.9H1643M72 764.7H1643M72 817.6H1643M72 870.4H1643M72 923.2H1643M293.0 395.0V924M514.3 395.0V924M736.0 395.0V924M957.6 395.0V924M1179.2 395.0V924M1400.4 395.0V924M1621.6 395.0V924" stroke="#e3e3e3" stroke-width="1.2"/>
<path d="M72.0 346.0V395.0M293.0 346.0V395.0M514.3 346.0V395.0M736.0 346.0V395.0M957.6 346.0V395.0M1179.2 346.0V395.0M1400.4 346.0V395.0M1621.6 346.0V395.0" stroke="#c9c7cb" stroke-width="1.3"/>
<path d="M0 447.8H72M0 500.6H72M0 553.5H72M0 606.3H72M0 659.1H72M0 711.9H72M0 764.7H72M0 817.6H72M0 870.4H72M0 923.2H72" stroke="#c9c7cb" stroke-width="1.3"/>
<path d="M0 395.0H1643" stroke="#a9a7ab" stroke-width="1.6"/>
<path d="M72 395.0V924" stroke="#a9a7ab" stroke-width="1.6"/>
<path d="M514.3 395.0H736.0" stroke="#1f6b43" stroke-width="2.2"/>
<path d="M71.5 606.3V659.1" stroke="#1f6b43" stroke-width="2.2"/>
<rect x="290.8" y="447.2" width="223.2" height="319.4" fill="none" stroke="#d8121a" stroke-width="4.2"/>
<rect x="515.3" y="606.8" width="221.2" height="52.3" fill="none" stroke="#1f6b43" stroke-width="2"/>
<rect x="733" y="655.4" width="5.5" height="5.6" fill="#1f6b43"/>
</svg>

</body></html>
